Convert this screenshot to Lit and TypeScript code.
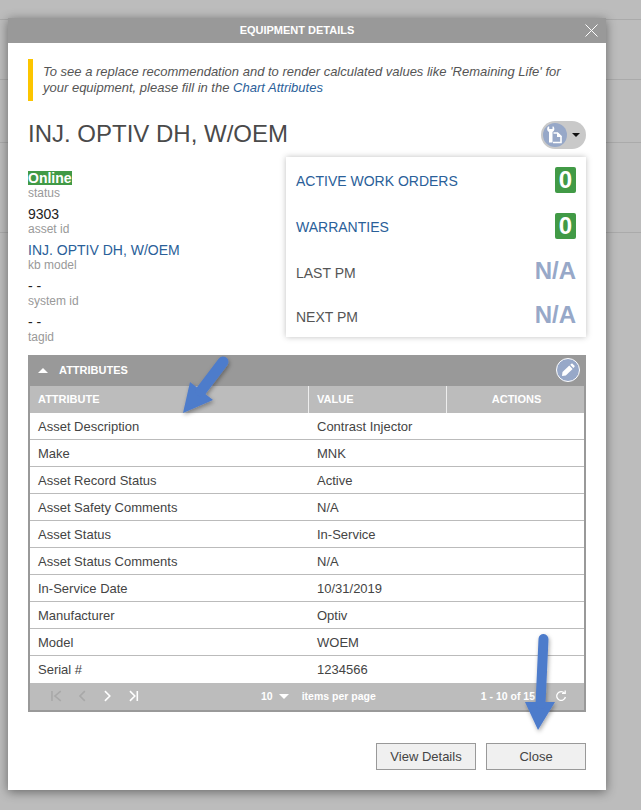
import { LitElement, html, css, svg } from "lit";
import { customElement } from "lit/decorators.js";

const rows: [string, string][] = [
  ["Asset Description", "Contrast Injector"],
  ["Make", "MNK"],
  ["Asset Record Status", "Active"],
  ["Asset Safety Comments", "N/A"],
  ["Asset Status", "In-Service"],
  ["Asset Status Comments", "N/A"],
  ["In-Service Date", "10/31/2019"],
  ["Manufacturer", "Optiv"],
  ["Model", "WOEM"],
  ["Serial #", "1234566"],
];

const info: [string, string, string][] = [
  ["9303", "asset id", "plain"],
  ["INJ. OPTIV DH, W/OEM", "kb model", "link"],
  ["- -", "system id", "plain"],
  ["- -", "tagid", "plain"],
];

@customElement("app-root")
export class AppRoot extends LitElement {
  static styles = css`
    :host {
      display: block;
      position: relative;
      width: 641px;
      height: 810px;
      overflow: hidden;
      box-sizing: border-box;
      padding: 18px 35px 0 8px;
      font-family: "Liberation Sans", Arial, sans-serif;
      color: #444;
      background:
        linear-gradient(#aaa, #aaa) 0 19px / 100% 1px no-repeat,
        linear-gradient(#aaa, #aaa) 0 79px / 100% 1px no-repeat,
        linear-gradient(#aaa, #aaa) 0 142px / 100% 1px no-repeat,
        linear-gradient(#aaa, #aaa) 0 232px / 100% 1px no-repeat,
        #bcbcbc;
    }
    .modal {
      height: 772px;
      background: #fff;
      box-shadow: 0 2px 10px rgba(0, 0, 0, 0.45);
      display: flex;
      flex-direction: column;
    }
    .head {
      height: 25px;
      flex: none;
      box-sizing: border-box;
      padding: 0 20px 1px 0;
      background: #999;
      color: #fff;
      font-size: 11px;
      font-weight: 700;
      display: flex;
      align-items: center;
      justify-content: center;
      position: relative;
    }
    .x {
      position: absolute;
      right: 8px;
      top: 6px;
      width: 13px;
      height: 13px;
    }
    .body {
      flex: 1;
      padding: 16px 20px 20px;
      display: flex;
      flex-direction: column;
    }
    .notice {
      height: 42px;
      box-sizing: border-box;
      border-left: 5px solid #fcc500;
      padding: 5px 0 0 10px;
      font-size: 13px;
      line-height: 16px;
      font-style: italic;
      color: #555;
    }
    .notice span,
    .link {
      color: #2a6099;
    }
    .title-row {
      display: flex;
      justify-content: space-between;
      align-items: flex-start;
      height: 28px;
      margin-top: 20px;
    }
    h1 {
      margin: 0;
      font-size: 24px;
      line-height: 26px;
      font-weight: 400;
      color: #4a4a4a;
    }
    .pill {
      width: 45px;
      height: 28px;
      border-radius: 14px;
      background: #c9c9c9;
      display: flex;
      align-items: center;
      padding-left: 2px;
      box-sizing: border-box;
      gap: 5px;
    }
    .round {
      width: 24px;
      height: 24px;
      border-radius: 50%;
      background: #97a8c8;
      display: flex;
      align-items: center;
      justify-content: center;
    }
    .caret {
      border: 4px solid transparent;
      border-top: 4px solid #111;
      border-bottom: 0;
    }
    .mid {
      display: flex;
      justify-content: space-between;
      margin-top: 8px;
      height: 180px;
    }
    .info {
      padding-top: 14px;
      display: flex;
      flex-direction: column;
      gap: 7px;
    }
    .val {
      font-size: 14px;
      line-height: 15px;
      color: #222;
      height: 15px;
    }
    .val.link {
      color: #2a6099;
    }
    .online {
      display: inline-block;
      background: #419a46;
      color: #fff;
      font-weight: 700;
      font-size: 14px;
      line-height: 14px;
    }
    .lab {
      font-size: 12px;
      line-height: 13px;
      padding-top: 1px;
      color: #999;
    }
    .card {
      width: 300px;
      background: #fff;
      box-shadow: 0 0 6px rgba(0, 0, 0, 0.25);
      box-sizing: border-box;
      padding: 1px 10px 0;
    }
    .stat {
      height: 46px;
      display: flex;
      align-items: center;
      justify-content: space-between;
      font-size: 14px;
      color: #555;
    }
    .stat.short {
      height: 42px;
    }
    .badge {
      width: 21px;
      height: 26px;
      margin-top: -2px;
      border-radius: 2px;
      background: #419a46;
      color: #fff;
      font-size: 24px;
      font-weight: 700;
      display: flex;
      align-items: center;
      justify-content: center;
    }
    .na {
      margin-top: -4px;
      font-size: 24px;
      font-weight: 700;
      color: #97a8c8;
    }
    .panel {
      margin-top: 18px;
      border: 2px solid #999;
      border-top: 0;
    }
    .phead {
      height: 31px;
      margin: 0 -2px;
      box-sizing: border-box;
      background: #999;
      color: #fff;
      font-size: 11px;
      font-weight: 700;
      display: flex;
      align-items: center;
      padding: 0 6px 1px 10px;
      position: relative;
    }
    .tri {
      border: 5px solid transparent;
      border-bottom: 5px solid #fff;
      border-top: 0;
      margin-right: 11px;
    }
    .edit {
      margin-left: auto;
      width: 22px;
      height: 22px;
      border: 1px solid #fff;
      border-radius: 50%;
      background: #97a8c8;
      display: flex;
      align-items: center;
      justify-content: center;
    }
    .grid {
      display: grid;
      grid-template-columns: 279px 138px 1fr;
    }
    .th {
      height: 27px;
      box-sizing: border-box;
      padding: 0 0 1px 8px;
      background: #bcbcbc;
      color: #fff;
      font-size: 11px;
      font-weight: 700;
      display: flex;
      align-items: center;
      border-right: 1px solid #eee;
    }
    .th:nth-child(3) {
      border-right: 0;
      justify-content: center;
      padding-left: 2px;
    }
    .td {
      height: 27px;
      box-sizing: border-box;
      border-bottom: 1px solid #bbb;
      font-size: 13px;
      color: #444;
      display: flex;
      align-items: center;
      padding-left: 8px;
    }
    .td.last {
      border-bottom: 0;
    }
    .pager {
      height: 27px;
      box-sizing: border-box;
      padding: 0 17px 1px 20px;
      background: #bcbcbc;
      color: #fff;
      font-size: 10.5px;
      font-weight: 700;
      display: flex;
      align-items: center;
    }
    .nav {
      width: 25.5px;
      height: 12px;
      display: block;
    }
    .per {
      margin-left: 109px;
      display: flex;
      align-items: center;
      gap: 6px;
    }
    .dn {
      border: 5px solid transparent;
      border-top: 5px solid #fff;
      border-bottom: 0;
      margin-right: 7px;
    }
    .range {
      margin-left: auto;
      margin-right: 20px;
    }
    .foot {
      margin-top: auto;
      display: flex;
      justify-content: flex-end;
      gap: 10px;
    }
    button {
      width: 100px;
      height: 27px;
      background: #f0f0f0;
      border: 1px solid #999;
      font: 13px "Liberation Sans", Arial, sans-serif;
      color: #444;
      padding: 0;
    }
    .arrows {
      position: absolute;
      left: 0;
      top: 0;
      width: 641px;
      height: 810px;
      pointer-events: none;
      overflow: visible;
    }
  `;

  render() {
    return html`
      <div class="modal">
        <div class="head">
          EQUIPMENT DETAILS
          <svg class="x" viewBox="0 0 13 13"><path d="M0.5 0.5L12.5 12.5M12.5 0.5L0.5 12.5" stroke="#fff" stroke-width="1" fill="none" /></svg>
        </div>
        <div class="body">
          <div class="notice">
            To see a replace recommendation and to render calculated values like 'Remaining Life' for<br />
            your equipment, please fill in the <span>Chart Attributes</span>
          </div>
          <div class="title-row">
            <h1>INJ. OPTIV DH, W/OEM</h1>
            <div class="pill">
              <div class="round">
                <svg width="20" height="20" viewBox="0 0 20 20"><path fill="#fff" d="M3 1.5C1.5 3.5 2 6 4 7L4 17.5L7.5 17.5L7.5 7C9.5 6 10 3.5 8.5 1.5L7.5 1.5L7.5 4L4.2 4L4.2 1.5Z" /><path fill="none" stroke="#fff" stroke-width="1.6" d="M8.5 8H12.5L16 11.3V17.5H8" /><path fill="#fff" d="M12 8H13L16.5 11.3V12H12Z" /></svg>
              </div>
              <div class="caret"></div>
            </div>
          </div>
          <div class="mid">
            <div class="info">
              <div>
                <div class="val"><span class="online">Online</span></div>
                <div class="lab">status</div>
              </div>
              ${info.map(
                ([v, l, k]) => html`<div><div class="val ${k === "link" ? "link" : ""}">${v}</div><div class="lab">${l}</div></div>`
              )}
            </div>
            <div class="card">
              <div class="stat"><span class="link">ACTIVE WORK ORDERS</span><span class="badge">0</span></div>
              <div class="stat"><span class="link">WARRANTIES</span><span class="badge">0</span></div>
              <div class="stat"><span>LAST PM</span><span class="na">N/A</span></div>
              <div class="stat short"><span>NEXT PM</span><span class="na">N/A</span></div>
            </div>
          </div>
          <div class="panel">
            <div class="phead">
              <span class="tri"></span>ATTRIBUTES
              <span class="edit">
                <svg width="16" height="16" viewBox="0 0 16 16" fill="#fff"><path d="M2.5 10L9.3 3.6L12.6 7L5.8 13.5L2 14Z" /><path d="M10.2 2.8L11.2 1.9C11.7 1.5 12.3 1.5 12.7 1.9L14.4 3.6C14.8 4 14.8 4.7 14.4 5.1L13.4 6.1Z" /></svg>
              </span>
            </div>
            <div class="grid">
              <div class="th">ATTRIBUTE</div>
              <div class="th">VALUE</div>
              <div class="th">ACTIONS</div>
              ${rows.map(
                ([a, b], i) => html`
                  <div class="td ${i === 9 ? "last" : ""}">${a}</div>
                  <div class="td ${i === 9 ? "last" : ""}">${b}</div>
                  <div class="td ${i === 9 ? "last" : ""}"></div>
                `
              )}
            </div>
            <div class="pager">
              <svg class="nav" viewBox="0 0 26 12" fill="none" stroke="#a8a8a8" stroke-width="1.6"><path d="M2 1V11M11 1L5 6L11 11" /></svg>
              <svg class="nav" viewBox="0 0 26 12" fill="none" stroke="#a8a8a8" stroke-width="1.6"><path d="M9 1L4 6L9 11" /></svg>
              <svg class="nav" viewBox="0 0 26 12" fill="none" stroke="#fff" stroke-width="1.6"><path d="M4 1L9 6L4 11" /></svg>
              <svg class="nav" viewBox="0 0 26 12" fill="none" stroke="#fff" stroke-width="1.6"><path d="M3 1L8 6L3 11M10.5 1V11" /></svg>
              <div class="per"><span>10</span><span class="dn"></span><span>items per page</span></div>
              <span class="range">1 - 10 of 15</span>
              <svg width="12" height="12" viewBox="0 0 12 12" fill="none" stroke="#fff" stroke-width="1.3"><path d="M9.5 3.2A4.4 4.4 0 1 0 10.4 7" /><path d="M7 3.4H10.2V0.4" /></svg>
            </div>
          </div>
          <div class="foot">
            <button>View Details</button>
            <button>Close</button>
          </div>
        </div>
      </div>
      <svg class="arrows" viewBox="0 0 641 810">
        <defs>
          <filter id="s" x="-30%" y="-30%" width="160%" height="160%"><feDropShadow dx="1" dy="2" stdDeviation="2" flood-color="#000" flood-opacity="0.35" /></filter>
        </defs>
        ${svg`
          <g filter="url(#s)" fill="#4e7bcb" stroke-linecap="round">
            <path d="M183 413L190 382L213 400Z" />
            <path d="M201 391L223 362" fill="none" stroke="#4e7bcb" stroke-width="11" />
            <path d="M525 702H555L538 730Z" />
            <path d="M543.5 639L540.5 704" fill="none" stroke="#4e7bcb" stroke-width="10" />
          </g>
        `}
      </svg>
    `;
  }
}
